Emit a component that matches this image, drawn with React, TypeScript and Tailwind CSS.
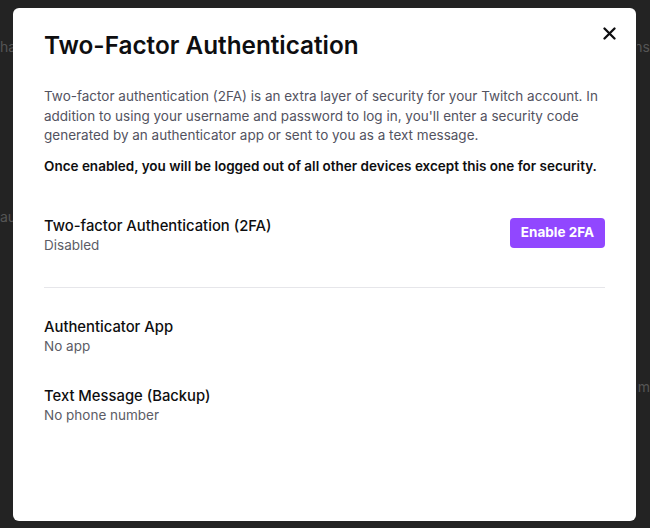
import React from "react";

const font = { fontFamily: "Inter, 'Noto Sans', sans-serif" };

function Row({ title, sub, action }: { title: string; sub: string; action?: React.ReactNode }) {
  return (
    <div className="flex items-start justify-between">
      <div>
        <div className="text-[14.8px] font-medium leading-[20px] text-[#0e0e10]">{title}</div>
        <div className="text-[13.5px] leading-[19px] text-[#5c5c66]">{sub}</div>
      </div>
      {action}
    </div>
  );
}

// slivers of the settings page that show past the dialog edges
function Peek({ text, side, top }: { text: string; side: "left" | "right"; top: string }) {
  return (
    <div
      className={`absolute w-[13px] overflow-hidden whitespace-nowrap text-[14px] text-[#555] ${
        side === "left" ? "left-0" : "right-0 flex justify-end"
      }`}
      style={{ top }}
    >
      {text}
    </div>
  );
}

export default function App() {
  return (
    <div className="relative h-[528px] w-[650px] overflow-hidden bg-[#232323]" style={font}>
      <Peek text="ha" side="left" top="36px" />
      <Peek text="ns" side="right" top="36px" />
      <Peek text="au" side="left" top="206px" />
      <Peek text="m" side="right" top="376px" />

      <div className="relative ml-[13px] mt-[8px] flex h-[513px] w-[623px] flex-col rounded-[6px] bg-white px-[31px] pt-[21px]">
        <button className="absolute right-[12px] top-[10px] flex h-[30px] w-[30px] items-center justify-center text-[#0e0e10]">
          <svg width="13" height="13" viewBox="0 0 13 13" fill="none" stroke="currentColor" strokeWidth="2.3" strokeLinecap="round">
            <path d="M1.5 1.5l10 10M11.5 1.5l-10 10" />
          </svg>
        </button>

        <h1 className="text-[24.3px] font-semibold leading-[32px] text-[#0e0e10]">Two-Factor Authentication</h1>

        <p className="mt-[26px] text-[13.5px] leading-[19.5px] text-[#53535f]">
          Two-factor authentication (2FA) is an extra layer of security for your Twitch account. In addition to using
          your username and password to log in, you'll enter a security code generated by an authenticator app or sent
          to you as a text message.
        </p>
        <p className="mt-[10px] text-[13.5px] font-semibold leading-[20px] text-[#0e0e10]">
          Once enabled, you will be logged out of all other devices except this one for security.
        </p>

        <div className="mt-[40px] pb-[32px]">
          <Row
            title="Two-factor Authentication (2FA)"
            sub="Disabled"
            action={
              <button className="mt-[2px] h-[30px] rounded-[4px] bg-[#9147ff] px-[11px] text-[13.5px] font-bold text-white">
                Enable 2FA
              </button>
            }
          />
        </div>
        <div className="h-px bg-[#e6e6ea]" />

        <div className="mt-[29px] flex flex-col gap-[30px]">
          <Row title="Authenticator App" sub="No app" />
          <Row title="Text Message (Backup)" sub="No phone number" />
        </div>
      </div>
    </div>
  );
}
